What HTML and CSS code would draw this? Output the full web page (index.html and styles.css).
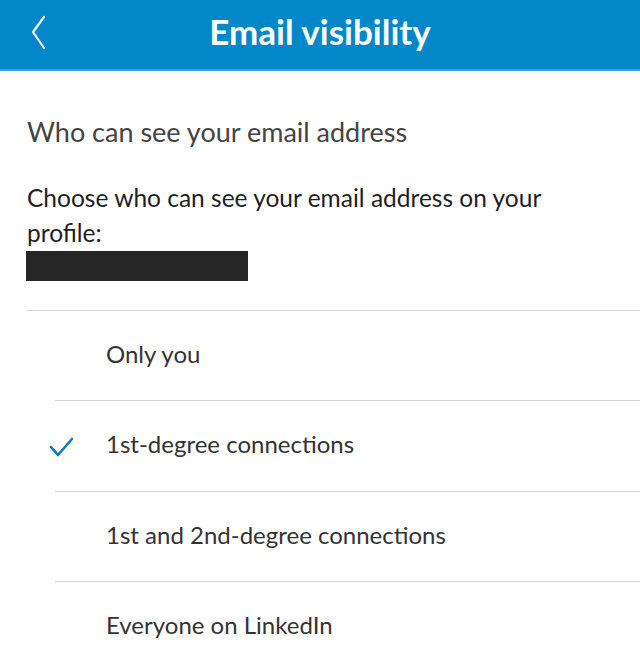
FILE: index.html
```html
<!DOCTYPE html>
<html>
<head>
<meta charset="utf-8">
<link rel="stylesheet" href="styles.css">
</head>
<body>
<header class="topbar">
  <span class="back">
    <svg width="16" height="36" viewBox="0 0 16 36"><path d="M13 2 L2 17 L13 33" fill="none" stroke="#fff" stroke-width="2.2" stroke-linecap="round" stroke-linejoin="round"/></svg>
  </span>
  <h1 class="title">Email visibility</h1>
</header>
<main class="content">
  <h2 class="heading">Who can see your email address</h2>
  <p class="desc">Choose who can see your email address on your profile:</p>
  <div class="redact"></div>
</main>
<ul class="options">
  <li class="option first"><span class="check"></span><span class="label">Only you</span></li>
  <li class="option"><span class="check"><svg width="26" height="22" viewBox="0 0 26 22"><path d="M2 11 L9 19 L23 3" fill="none" stroke="#0a7bbf" stroke-width="2.6" stroke-linecap="round" stroke-linejoin="round"/></svg></span><span class="label">1st-degree connections</span></li>
  <li class="option"><span class="check"></span><span class="label">1st and 2nd-degree connections</span></li>
  <li class="option"><span class="check"></span><span class="label">Everyone on LinkedIn</span></li>
</ul>
</body>
</html>
```
FILE: styles.css
```css
html, body { margin: 0; padding: 0; background: #fff; }
body { font-family: "Lato", "Open Sans", sans-serif; width: 640px; height: 653px; overflow: hidden; }
.topbar {
  height: 69px;
  background: #0287c8;
  border-bottom: 2px solid #3b9fd3;
  display: flex;
  align-items: center;
  justify-content: center;
  position: relative;
}
.back { position: absolute; left: 31px; top: 15px; display: flex; }
.title { margin: 0 0 8px; color: #fff; font-size: 35px; font-weight: 700; letter-spacing: 0; }
.content { padding: 44px 0 0 27px; }
.heading { margin: 0; font-size: 27px; font-weight: 400; color: #444; line-height: 34px; }
.desc { margin: 31px 0 0; font-size: 24.5px; color: #1f1f1f; line-height: 35px; width: 560px; }
.redact { width: 222px; height: 30px; background: #262626; margin-top: 1px; margin-left: -1px; }
.options { list-style: none; margin: 29px 0 0 27px; padding: 0; }
.option {
  height: 89.3px;
  display: flex;
  align-items: center;
  border-top: 1px solid #d6d6d6;
  margin-left: 28px;
}
.option.first { margin-left: 0; }
.check { width: 51px; display: flex; justify-content: flex-start; margin-left: -6px; margin-right: 6px; padding-top: 2px; }
.option.first .check { margin-left: 22px; }
.label { font-size: 24px; color: #333; padding-bottom: 4px; }
```
